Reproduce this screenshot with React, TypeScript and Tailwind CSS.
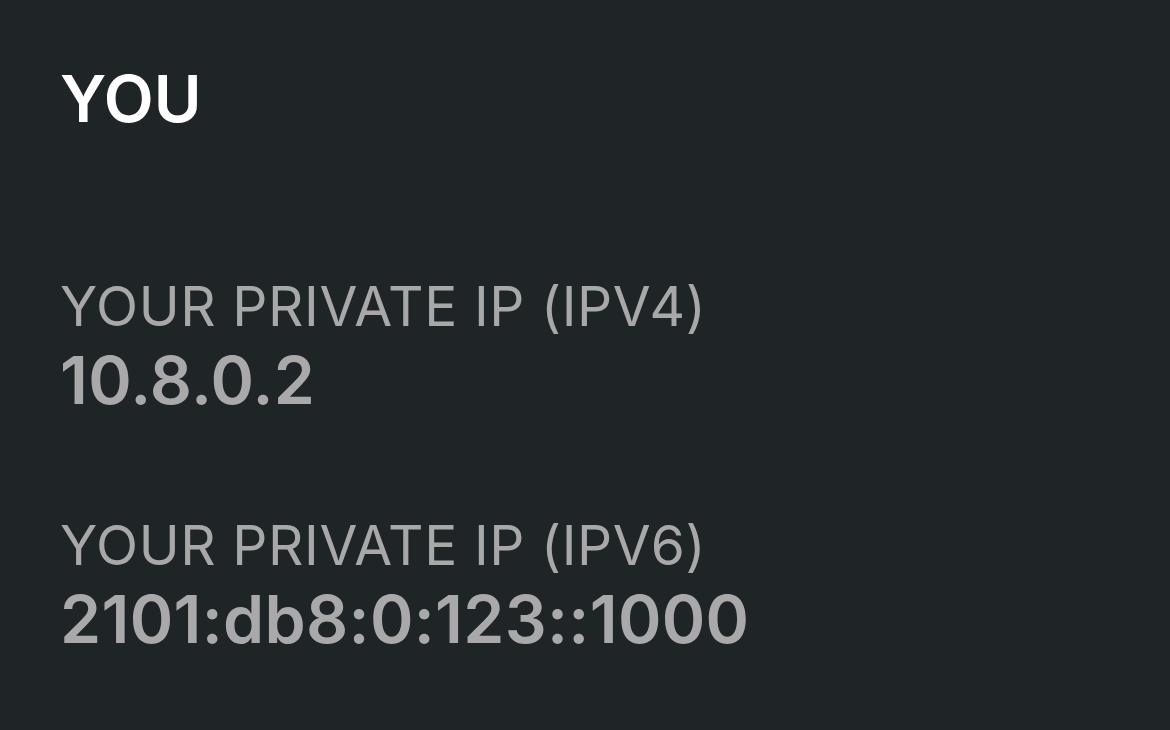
export default function App() {
  const rows = [
    { label: 'YOUR PRIVATE IP (IPV4)', value: '10.8.0.2' },
    { label: 'YOUR PRIVATE IP (IPV6)', value: '2101:db8:0:123::1000' },
  ]

  return (
    <div
      className="w-[1170px] h-[730px] bg-[#1f2427] pl-[60px] pt-[66px] overflow-hidden"
      style={{ fontFamily: 'Inter, "Noto Sans", sans-serif' }}
    >
      {/* Section title */}
      <h1 className="text-[65px] leading-none font-semibold text-white">YOU</h1>

      {/* Address rows */}
      <div className="mt-[148px] flex flex-col gap-[105px]">
        {rows.map((row) => (
          <div key={row.label} className="flex flex-col gap-[13px]">
            <div className="text-[55px] leading-none font-normal tracking-[0.6px] text-[#a8a8a8]">{row.label}</div>
            <div className="text-[66px] leading-none font-semibold tracking-[0.3px] text-[#a9a9a9]">{row.value}</div>
          </div>
        ))}
      </div>
    </div>
  )
}
